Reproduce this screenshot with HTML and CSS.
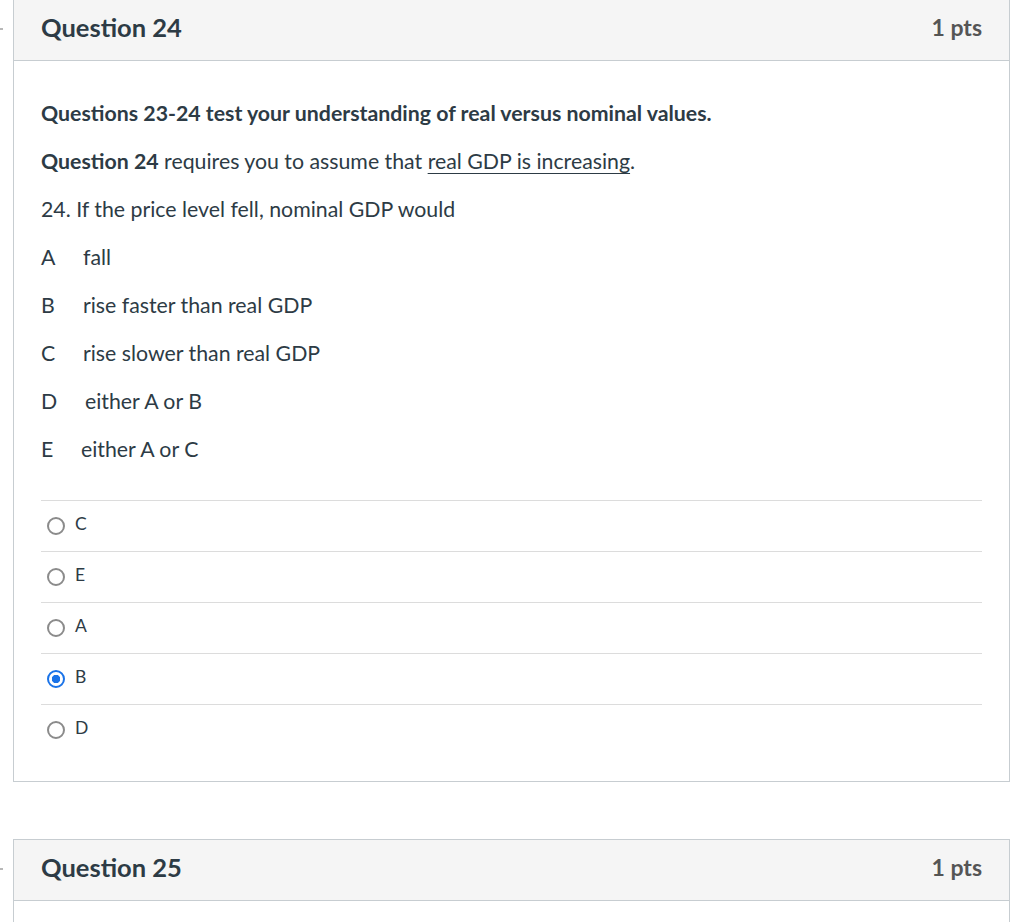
FILE: index.html
```html
<!DOCTYPE html>
<html lang="en">
<head>
    <meta charset="UTF-8">
    <meta name="viewport" content="width=device-width, initial-scale=1.0">
    <title>Quiz</title>
    <link rel="stylesheet" href="styles.css">
</head>
<body>
    <div class="quiz">
        <div class="question">
            <div class="question-header">
                <h2>Question 24</h2>
                <span class="points">1 pts</span>
            </div>
            <div class="question-body">
                <p><strong>Questions 23-24 test your understanding of real versus nominal values.</strong></p>
                <p><strong>Question 24</strong> requires you to assume that <u>real GDP is increasing</u>.</p>
                <p>24. If the price level fell, nominal GDP would</p>
                <p><span class="letter">A</span>fall</p>
                <p><span class="letter">B</span>rise faster than real GDP</p>
                <p><span class="letter">C</span>rise slower than real GDP</p>
                <p><span class="letter letter-wide">D</span>either A or B</p>
                <p><span class="letter letter-narrow">E</span>either A or C</p>

                <div class="answers">
                    <label class="answer"><span class="radio"></span>C</label>
                    <label class="answer"><span class="radio"></span>E</label>
                    <label class="answer"><span class="radio"></span>A</label>
                    <label class="answer"><span class="radio checked"></span>B</label>
                    <label class="answer"><span class="radio"></span>D</label>
                </div>
            </div>
        </div>

        <div class="question">
            <div class="question-header">
                <h2>Question 25</h2>
                <span class="points">1 pts</span>
            </div>
            <div class="question-body"></div>
        </div>
    </div>
</body>
</html>
```

FILE: styles.css
```css
/* General Styles */
body {
    font-family: 'Lato', 'Liberation Sans', sans-serif;
    background-color: #ffffff;
    color: #2d3b45;
    margin: 0;
}

.quiz {
    padding-left: 13px;
    width: 997px;
    margin-top: -1px;
}

.question {
    border: 1px solid #c7cdd1;
    margin-bottom: 57px;
}

.question-header {
    position: relative;
    display: flex;
    justify-content: space-between;
    align-items: center;
    box-sizing: border-box;
    height: 61px;
    padding: 0 27px 6px;
    background: #f5f5f5;
    border-bottom: 1px solid #c7cdd1;
}

/* little marker sticking out on the left */
.question-header::before {
    content: "";
    position: absolute;
    left: -14px;
    top: 28px;
    width: 3px;
    height: 2px;
    background: #b8b8b8;
}

.question-header h2 {
    margin: 0;
    font-size: 25.5px;
    font-weight: 700;
    color: #2d3b45;
}

.points {
    font-size: 23px;
    font-weight: 700;
    color: #555555;
}

.question-body {
    padding: 38px 27px 26px;
    min-height: 20px;
}

.question-body p {
    margin: 0 0 20px;
    font-size: 21.3px;
    line-height: 28px;
}

.question-body u {
    text-decoration-thickness: 1px;
    text-underline-offset: 4px;
}

.letter {
    display: inline-block;
    width: 42px;
}

.letter-wide {
    width: 44px;
}

.letter-narrow {
    width: 40px;
}

.answers {
    margin-top: 37px;
}

.answer {
    display: flex;
    align-items: center;
    box-sizing: border-box;
    height: 51px;
    padding: 0 0 6px 6px;
    border-top: 1px solid #dcdcdc;
    font-size: 17.5px;
}

.radio {
    box-sizing: border-box;
    width: 18px;
    height: 18px;
    border: 2.5px solid #8b8b8b;
    border-radius: 50%;
    margin-right: 10px;
    margin-top: 6px;
}

.radio.checked {
    border-color: #1a73e8;
    background: radial-gradient(circle, #1a73e8 0 4px, #ffffff 4.5px);
}
```
